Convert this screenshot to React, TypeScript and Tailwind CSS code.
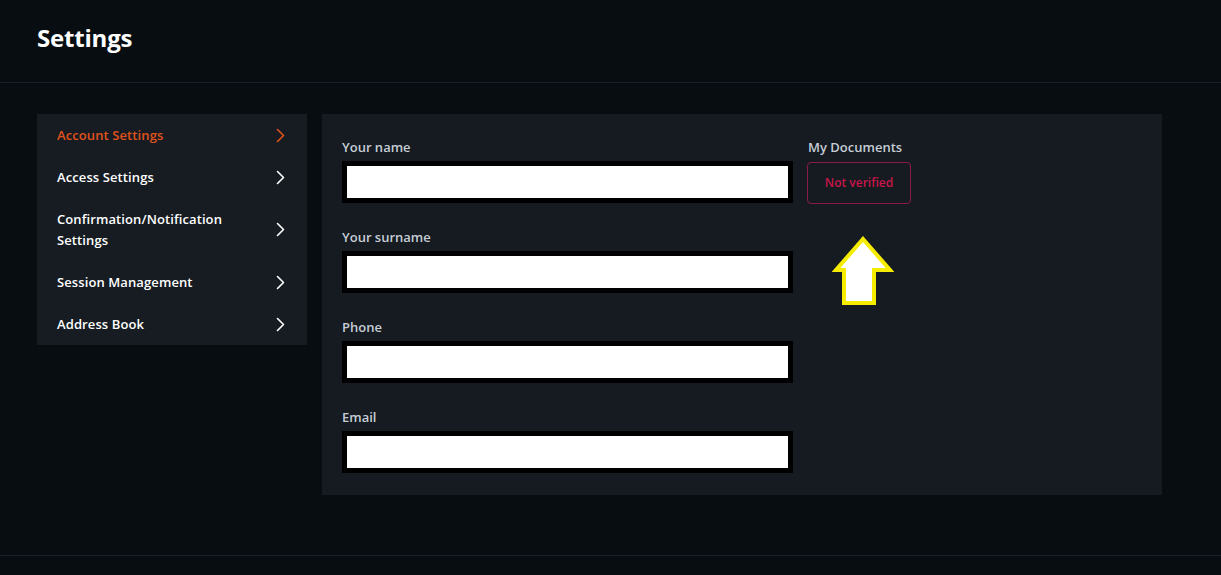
import React from "react";

const Chevron = () => (
  <svg width="9" height="15" viewBox="0 0 9 15" fill="none" className="shrink-0">
    <path d="M1.5 1.5 L7.5 7.5 L1.5 13.5" stroke="currentColor" strokeWidth="1.6" strokeLinecap="round" strokeLinejoin="round" />
  </svg>
);

const items = [
  { label: "Account Settings", active: true, tall: false },
  { label: "Access Settings", active: false, tall: false },
  { label: "Confirmation/Notification Settings", active: false, tall: true },
  { label: "Session Management", active: false, tall: false },
  { label: "Address Book", active: false, tall: false },
];

const Field = ({ label, last }: { label: string; last?: boolean }) => (
  <div className={last ? "" : "mb-[24px]"}>
    <div className="text-[13px] leading-[20px] font-semibold text-[#c6cdd6]">{label}</div>
    <div className="mt-[4px] h-[42px] w-[451px] bg-black p-[5px]">
      <div className="h-full w-full bg-white" />
    </div>
  </div>
);

export default function App() {
  return (
    <div
      className="min-h-[575px] w-full bg-[#070d10] text-white"
      style={{ fontFamily: '"Open Sans", "Noto Sans", sans-serif' }}
    >
      <header className="h-[83px] border-b border-[#1c1f2b] px-[37px] flex items-center pb-[6px]">
        <h1 className="text-[24px] font-bold leading-none tracking-[-0.2px]">Settings</h1>
      </header>
      <main className="flex gap-[15px] px-[37px] pt-[31px] pb-[60px] border-b border-[#1c1f2b]">
        <nav className="w-[270px] self-start bg-[#161c22]">
          {items.map((it) => (
            <div
              key={it.label}
              className={`flex items-center justify-between pl-[20px] pr-[22px] ${it.tall ? "h-[63px]" : "h-[42px]"} ${it.active ? "text-[#e0521c]" : "text-white"}`}
            >
              <span className={`text-[13px] font-semibold leading-[21px] tracking-[0.1px] ${it.tall ? "w-[180px]" : ""}`}>{it.label}</span>
              <Chevron />
            </div>
          ))}
        </nav>
        <section className="relative w-[840px] bg-[#151b21] pl-[20px] pt-[23px] pb-[22px] flex gap-[14px]">
          <div>
            <Field label="Your name" />
            <Field label="Your surname" />
            <Field label="Phone" />
            <Field label="Email" last />
          </div>
          <div>
            <div className="text-[13px] leading-[20px] font-semibold text-[#c6cdd6] pl-[1px]">My Documents</div>
            <button className="mt-[5px] h-[42px] w-[104px] rounded-[4px] border border-[#8a1c44] text-[12px] font-semibold text-[#c8164a]">
              Not verified
            </button>
          </div>
          <svg
            className="absolute left-[510px] top-[122px]"
            width="62"
            height="72"
            viewBox="0 0 62 72"
          >
            <polygon
              points="31,3 58,34 42,34 42,67 12,67 12,34 4,34"
              fill="#ffffff"
              stroke="#f5ec00"
              strokeWidth="4"
              strokeLinejoin="miter"
            />
          </svg>
        </section>
      </main>
    </div>
  );
}
